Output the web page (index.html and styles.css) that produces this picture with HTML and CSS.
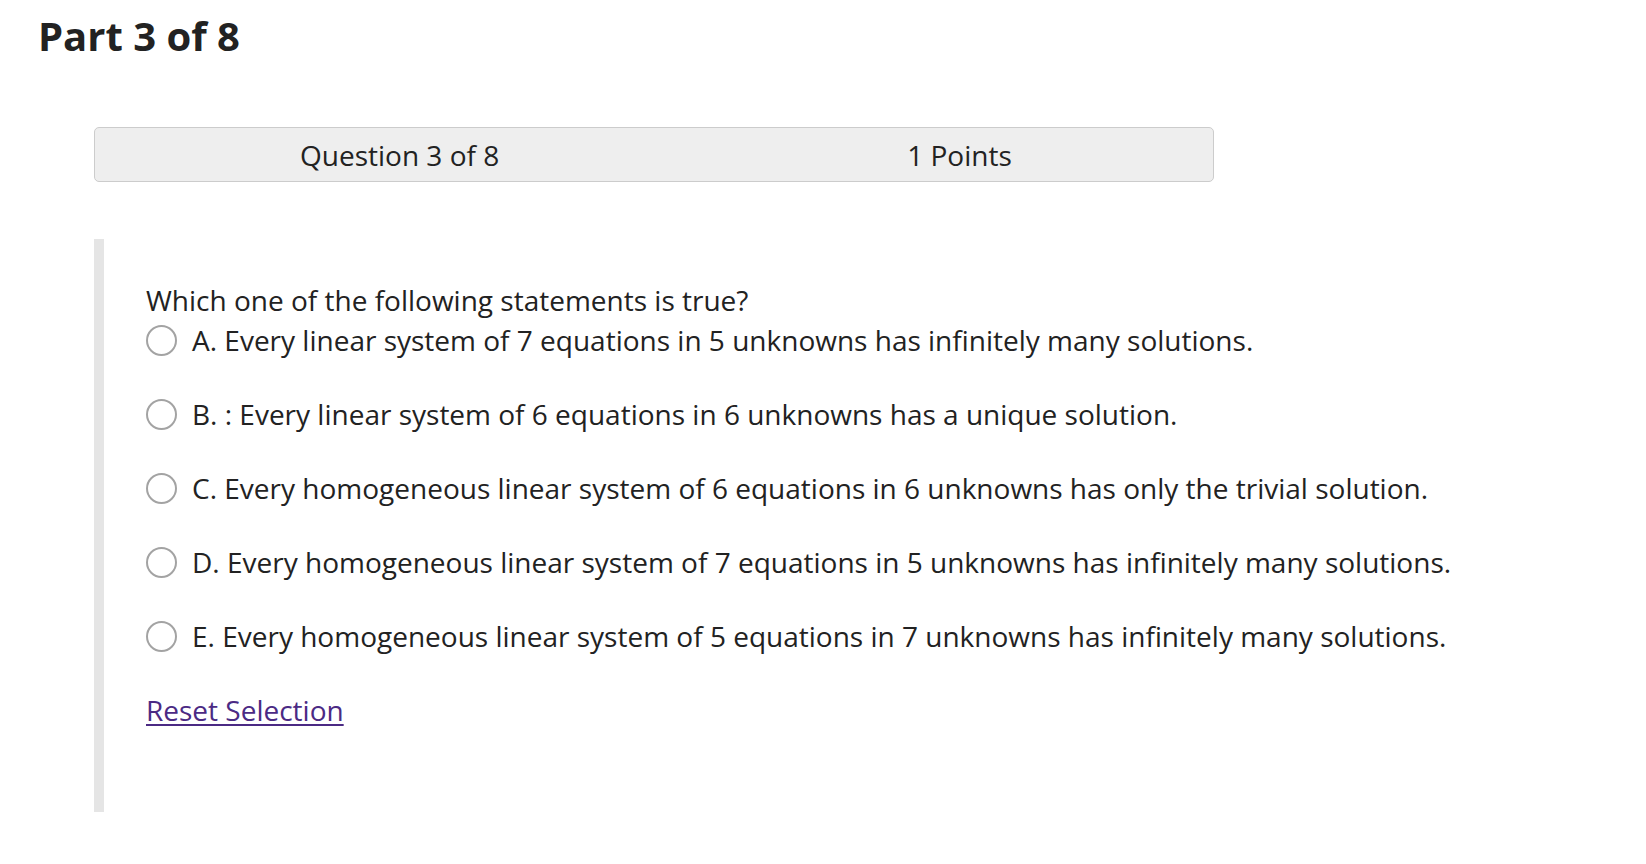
FILE: index.html
```html
<!DOCTYPE html>
<html lang="en">
<head>
<meta charset="utf-8">
<title>Part 3 of 8</title>
<link rel="stylesheet" href="styles.css">
</head>
<body>
<h1 class="part-title">Part 3 of 8</h1>
<div class="q-header">
  <span class="q-num">Question 3 of 8</span>
  <span class="q-points">1 Points</span>
</div>
<div class="q-body">
  <p class="q-prompt">Which one of the following statements is true?</p>
  <ul class="options">
    <li class="option"><span class="radio"></span><span class="opt-text">A. Every linear system of 7 equations in 5 unknowns has infinitely many solutions.</span></li>
    <li class="option"><span class="radio"></span><span class="opt-text">B. : Every linear system of 6 equations in 6 unknowns has a unique solution.</span></li>
    <li class="option"><span class="radio"></span><span class="opt-text">C. Every homogeneous linear system of 6 equations in 6 unknowns has only the trivial solution.</span></li>
    <li class="option"><span class="radio"></span><span class="opt-text">D. Every homogeneous linear system of 7 equations in 5 unknowns has infinitely many solutions.</span></li>
    <li class="option"><span class="radio"></span><span class="opt-text">E. Every homogeneous linear system of 5 equations in 7 unknowns has infinitely many solutions.</span></li>
  </ul>
  <a class="reset" href="#">Reset Selection</a>
</div>
</body>
</html>
```

FILE: styles.css
```css
html, body {
  margin: 0;
  padding: 0;
  background: #ffffff;
}
body {
  font-family: "Open Sans", "Noto Sans", sans-serif;
  color: #222222;
}
.part-title {
  margin: 0;
  padding: 8px 0 0 38px;
  font-size: 40px;
  line-height: 56px;
  font-weight: 700;
  color: #222222;
}
.q-header {
  margin: 63px 0 0 94px;
  width: 1118px;
  height: 52px;
  padding-top: 1px;
  border: 1px solid #cccccc;
  border-radius: 5px;
  background: #eeeeee;
  display: flex;
  align-items: center;
  font-size: 28px;
  line-height: 52px;
}
.q-num {
  margin-left: 205px;
}
.q-points {
  margin-left: 408px;
}
.q-body {
  margin: 57px 0 0 94px;
  border-left: 10px solid #e5e5e5;
  padding: 41px 0 82px 42px;
  font-size: 28px;
  line-height: 40px;
}
.q-prompt {
  margin: 0;
}
.options {
  list-style: none;
  margin: 0;
  padding: 0;
  display: flex;
  flex-direction: column;
  gap: 34px;
}
.option {
  display: flex;
  align-items: center;
  gap: 15px;
  height: 40px;
}
.radio {
  box-sizing: border-box;
  width: 31px;
  height: 31px;
  border: 2px solid #a3a3a3;
  border-radius: 50%;
  background: #ffffff;
  flex: none;
}
.reset {
  display: inline-block;
  margin-top: 34px;
  color: #4b2a84;
  text-decoration: underline;
  text-underline-offset: 3px;
  text-decoration-thickness: 2px;
}
```
